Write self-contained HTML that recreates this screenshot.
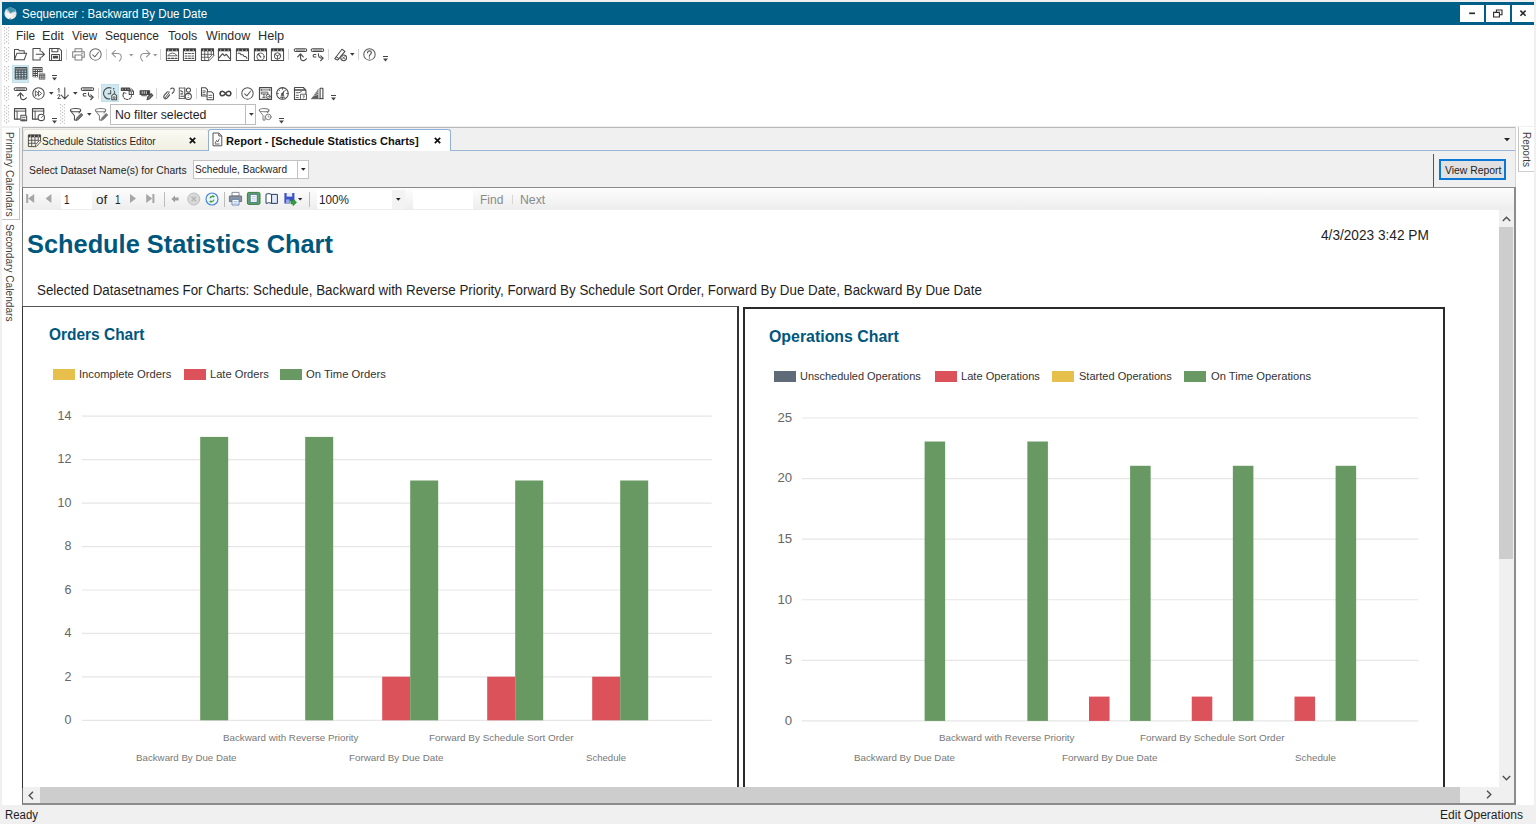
<!DOCTYPE html>
<html lang="en"><head><meta charset="utf-8"><title>Sequencer : Backward By Due Date</title>
<style>
html,body{margin:0;padding:0;}
body{width:1536px;height:824px;overflow:hidden;background:#f0f0f0;font-family:"Liberation Sans",sans-serif;}
#root{position:relative;width:1536px;height:824px;overflow:hidden;background:#f0f0f0;}
.a{position:absolute;box-sizing:border-box;}
.t{position:absolute;white-space:nowrap;line-height:0;font-kerning:normal;}
svg{position:absolute;overflow:visible;}
.v{position:absolute;white-space:nowrap;line-height:0;transform-origin:0 0;}

</style></head>
<body>
<div id="root">
<div class="a" style="left:2px;top:2px;width:1532px;height:23px;background:#005f87;"></div>
<div class="a" style="left:1460px;top:5px;width:24px;height:17px;background:#ffffff;"></div>
<div class="a" style="left:1486px;top:5px;width:24px;height:17px;background:#ffffff;"></div>
<div class="a" style="left:1512px;top:5px;width:22px;height:17px;background:#ffffff;"></div>
<div class="a" style="left:2px;top:25px;width:1532px;height:101px;background:#ffffff;"></div>
<div class="a" style="left:110px;top:104px;width:146px;height:21px;background:#ffffff;border:1px solid #bdbdbd;"></div>
<div class="a" style="left:245px;top:105px;width:1px;height:19px;background:#bdbdbd;"></div>
<div class="a" style="left:0px;top:127px;width:2px;height:679px;background:#f0f0f0;"></div>
<div class="a" style="left:2px;top:128px;width:20px;height:678px;background:#ffffff;"></div>
<div class="a" style="left:20px;top:127px;width:2px;height:60px;background:#f0f0f0;"></div>
<div class="a" style="left:22px;top:127px;width:1494px;height:24px;background:#f0f0f0;"></div>
<div class="a" style="left:22px;top:150px;width:1494px;height:1px;background:#9bb7d6;"></div>
<div class="a" style="left:23px;top:129px;width:186px;height:21px;background:linear-gradient(#fbfaf4,#f1efe2);border:1px solid #e6e4d8;border-bottom:none;border-radius:3px 3px 0 0;"></div>
<div class="a" style="left:208px;top:129px;width:243px;height:23px;background:#ffffff;border:1px solid #8fb0d8;border-bottom:none;border-radius:3px 3px 0 0;"></div>
<div class="a" style="left:22px;top:151px;width:1494px;height:36px;background:#f0f0f0;"></div>
<div class="a" style="left:193px;top:160px;width:116px;height:19px;background:#ffffff;border:1px solid #c3c3c3;"></div>
<div class="a" style="left:297px;top:161px;width:1px;height:17px;background:#c3c3c3;"></div>
<div class="a" style="left:1433px;top:154px;width:1px;height:33px;background:#555555;"></div>
<div class="a" style="left:1439px;top:159px;width:67px;height:21px;background:#e1e1e1;border:2px solid #0a78d7;"></div>
<div class="a" style="left:22px;top:187px;width:1494px;height:618px;background:#ffffff;border:1px solid #8a8a8a;border-left:1px solid #707070;border-right:2px solid #8c8c8c;border-bottom:2px solid #8c8c8c;"></div>
<div class="a" style="left:23px;top:188px;width:1491px;height:22px;background:linear-gradient(#fdfdfd,#ededed);"></div>
<div class="a" style="left:61px;top:190px;width:31px;height:19px;background:#ffffff;"></div>
<div class="a" style="left:317px;top:190px;width:88px;height:19px;background:#ffffff;"></div>
<div class="a" style="left:413px;top:190px;width:60px;height:19px;background:#ffffff;"></div>
<div class="a" style="left:512px;top:195px;width:1px;height:9px;background:#d6d6d6;"></div>
<div class="a" style="left:22px;top:306px;width:717px;height:482px;border-top:1px solid #555;border-right:2px solid #333;border-left:1px solid #333;"></div>
<div class="a" style="left:53px;top:369px;width:22px;height:11px;background:#e6c04b;"></div>
<div class="a" style="left:183.5px;top:369px;width:22px;height:11px;background:#db525a;"></div>
<div class="a" style="left:280px;top:369px;width:22px;height:11px;background:#699962;"></div>
<div class="a" style="left:743px;top:307px;width:702px;height:481px;border:2px solid #2a2a2a;border-bottom:none;"></div>
<div class="a" style="left:774px;top:371px;width:22px;height:11px;background:#5f6b78;"></div>
<div class="a" style="left:935px;top:371px;width:22px;height:11px;background:#db525a;"></div>
<div class="a" style="left:1052px;top:371px;width:22px;height:11px;background:#e6c04b;"></div>
<div class="a" style="left:1184px;top:371px;width:22px;height:11px;background:#699962;"></div>
<svg style="left:0;top:0" width="1536" height="824" viewBox="0 0 1536 824"><path d="M81.9 720.30H711.7" stroke="#e6e6e6" stroke-width="1.2"/><path d="M81.9 676.86H711.7" stroke="#e6e6e6" stroke-width="1.2"/><path d="M81.9 633.42H711.7" stroke="#e6e6e6" stroke-width="1.2"/><path d="M81.9 589.98H711.7" stroke="#e6e6e6" stroke-width="1.2"/><path d="M81.9 546.54H711.7" stroke="#e6e6e6" stroke-width="1.2"/><path d="M81.9 503.10H711.7" stroke="#e6e6e6" stroke-width="1.2"/><path d="M81.9 459.66H711.7" stroke="#e6e6e6" stroke-width="1.2"/><path d="M81.9 416.22H711.7" stroke="#e6e6e6" stroke-width="1.2"/><rect x="200.20" y="436.90" width="28.00" height="283.40" fill="#699962"/><rect x="305.20" y="436.90" width="28.00" height="283.40" fill="#699962"/><rect x="382.20" y="676.70" width="28.00" height="43.60" fill="#db525a"/><rect x="410.20" y="480.50" width="28.00" height="239.80" fill="#699962"/><rect x="487.20" y="676.70" width="28.00" height="43.60" fill="#db525a"/><rect x="515.20" y="480.50" width="28.00" height="239.80" fill="#699962"/><rect x="592.20" y="676.70" width="28.00" height="43.60" fill="#db525a"/><rect x="620.20" y="480.50" width="28.00" height="239.80" fill="#699962"/><path d="M801.8 720.90H1418.3" stroke="#e6e6e6" stroke-width="1.2"/><path d="M801.8 660.32H1418.3" stroke="#e6e6e6" stroke-width="1.2"/><path d="M801.8 599.74H1418.3" stroke="#e6e6e6" stroke-width="1.2"/><path d="M801.8 539.16H1418.3" stroke="#e6e6e6" stroke-width="1.2"/><path d="M801.8 478.58H1418.3" stroke="#e6e6e6" stroke-width="1.2"/><path d="M801.8 418.00H1418.3" stroke="#e6e6e6" stroke-width="1.2"/><rect x="924.60" y="441.50" width="20.55" height="279.40" fill="#699962"/><rect x="1027.35" y="441.50" width="20.55" height="279.40" fill="#699962"/><rect x="1089.00" y="696.60" width="20.55" height="24.30" fill="#db525a"/><rect x="1130.10" y="465.79" width="20.55" height="255.11" fill="#699962"/><rect x="1191.75" y="696.60" width="20.55" height="24.30" fill="#db525a"/><rect x="1232.85" y="465.79" width="20.55" height="255.11" fill="#699962"/><rect x="1294.50" y="696.60" width="20.55" height="24.30" fill="#db525a"/><rect x="1335.60" y="465.79" width="20.55" height="255.11" fill="#699962"/></svg>
<div class="a" style="left:1499px;top:210px;width:15px;height:577px;background:#f0f0f0;"></div>
<div class="a" style="left:1499px;top:227px;width:14px;height:332px;background:#cdcdcd;"></div>
<div class="a" style="left:23px;top:787px;width:1491px;height:16px;background:#f0f0f0;"></div>
<div class="a" style="left:40px;top:787px;width:1420px;height:16px;background:#cdcdcd;"></div>
<div class="a" style="left:1516px;top:127px;width:18px;height:679px;background:#ffffff;"></div>
<div class="a" style="left:1534px;top:25px;width:2px;height:781px;background:#f0f0f0;"></div>
<div class="a" style="left:0px;top:805px;width:1536px;height:19px;background:#f0f0f0;"></div>
<svg style="left:4px;top:47px" width="6" height="15.5" viewBox="0 0 6 15.5"><path d="M0.6 0.60h.01M4.5 0.60h.01M2.55 2.15h.01M0.6 3.70h.01M4.5 3.70h.01M2.55 5.25h.01M0.6 6.80h.01M4.5 6.80h.01M2.55 8.35h.01M0.6 9.90h.01M4.5 9.90h.01M2.55 11.45h.01M0.6 13.00h.01M4.5 13.00h.01M2.55 14.55h.01" stroke="#bdbdbd" stroke-width="1.15" stroke-linecap="square" fill="none"/></svg>
<svg style="left:13.30px;top:47.30px" width="14.96" height="14.96" viewBox="0 0 16 16" fill="none" stroke="#4a4a4a" stroke-width="1.1" stroke-linejoin="round" stroke-linecap="round"><path d="M1.6 13.6V2.6H5.6L7 4.1H12V6.6"/><path d="M1.6 13.6L4.2 6.6H14.6L12 13.6Z"/></svg>
<svg style="left:31.00px;top:47.30px" width="14.96" height="14.96" viewBox="0 0 16 16" fill="none" stroke="#4a4a4a" stroke-width="1.1" stroke-linejoin="round" stroke-linecap="round"><path d="M9.8 4.5V1.6H2.1V13.9H9.8V11"/><path d="M5.6 7.8H14.2M11.4 4.8L14.4 7.8L11.4 10.8"/></svg>
<svg style="left:48.30px;top:47.30px" width="14.96" height="14.96" viewBox="0 0 16 16" fill="none" stroke="#4a4a4a" stroke-width="1.1" stroke-linejoin="round" stroke-linecap="round"><path d="M1.6 1.6H12L14.4 4V14.4H1.6Z"/><path d="M4.2 1.8V5.2H10.6V1.8"/><path d="M3.8 14.2V8H12.2V14.2"/><path d="M5.8 9.8H10.2V11.8H5.8Z" fill="#3b3b3b"/></svg>
<div class="a" style="left:66px;top:49px;width:1px;height:11px;background:#d4d4d4;"></div>
<svg style="left:70.80px;top:47.30px" width="14.96" height="14.96" viewBox="0 0 16 16" fill="none" stroke="#7e7e7e" stroke-width="1.1" stroke-linejoin="round" stroke-linecap="round"><path d="M4.3 5.2V1.8H11.7V5.2"/><path d="M4.3 11H1.8V5.2H14.2V11H11.7"/><path d="M4.3 8.6H11.7V14H4.3Z"/><path d="M11.5 7h.6" /></svg>
<svg style="left:88.30px;top:47.30px" width="14.96" height="14.96" viewBox="0 0 16 16" fill="none" stroke="#6a6a6a" stroke-width="1.1" stroke-linejoin="round" stroke-linecap="round"><circle cx="8" cy="8" r="6.1"/><path d="M5 8.3L7.3 10.5L11.3 5.6"/></svg>
<div class="a" style="left:106px;top:49px;width:1px;height:11px;background:#d4d4d4;"></div>
<svg style="left:110.10px;top:47.70px" width="14.96" height="14.96" viewBox="0 0 16 16" fill="none" stroke="#8e8e8e" stroke-width="1.1" stroke-linejoin="round" stroke-linecap="round"><path d="M5.8 2.4L2.2 6L5.8 9.6"/><path d="M2.4 6H8.6Q12.6 6.4 12 10.4Q11.6 12.8 9.8 14"/></svg>
<svg style="left:129px;top:53.5px" width="4.4" height="2.6" viewBox="0 0 4.4 2.6"><path d="M0 0H4.4L2.2 2.6Z" fill="#9a9a9a"/></svg>
<svg style="left:136.70px;top:47.70px" width="14.96" height="14.96" viewBox="0 0 16 16" fill="none" stroke="#8e8e8e" stroke-width="1.1" stroke-linejoin="round" stroke-linecap="round"><path d="M10.2 2.4L13.8 6L10.2 9.6"/><path d="M13.6 6H7.4Q3.4 6.4 4 10.4Q4.4 12.8 6.2 14"/></svg>
<svg style="left:153.3px;top:53.5px" width="4.4" height="2.6" viewBox="0 0 4.4 2.6"><path d="M0 0H4.4L2.2 2.6Z" fill="#9a9a9a"/></svg>
<div class="a" style="left:160px;top:49px;width:1px;height:11px;background:#d4d4d4;"></div>
<svg style="left:164.80px;top:47.10px" width="14.96" height="14.96" viewBox="0 0 16 16" fill="none" stroke="#4a4a4a" stroke-width="1.1" stroke-linejoin="round" stroke-linecap="round"><path d="M1.5 2H14.5V14.5H1.5Z"/><path d="M1.5 2H14.5V4.6H1.5Z" fill="#3b3b3b" stroke="none"/><path d="M4 3.3h.01M8 3.3h.01M12 3.3h.01" stroke="#fff" stroke-width="1.2"/><path d="M3.2 9Q8 3.6 12.8 9M3.2 9.4H12.8" stroke-width="0.9"/><path d="M3.2 12.2h2M6.8 12.2h2.4M10.8 12.2h2" stroke-width="1.3"/></svg>
<svg style="left:182.35px;top:47.10px" width="14.96" height="14.96" viewBox="0 0 16 16" fill="none" stroke="#4a4a4a" stroke-width="1.1" stroke-linejoin="round" stroke-linecap="round"><path d="M1.5 2H14.5V14.5H1.5Z"/><path d="M1.5 2H14.5V4.6H1.5Z" fill="#3b3b3b" stroke="none"/><path d="M4 3.3h.01M8 3.3h.01M12 3.3h.01" stroke="#fff" stroke-width="1.2"/><path d="M3.4 7h2M7 7h2M10.6 7h2M3.4 9.6h2M7 9.6h2M10.6 9.6h2M3.4 12.2h2M7 12.2h2M10.6 12.2h2" stroke-width="1.2" stroke="#555"/></svg>
<svg style="left:199.90px;top:47.10px" width="14.96" height="14.96" viewBox="0 0 16 16" fill="none" stroke="#4a4a4a" stroke-width="1.1" stroke-linejoin="round" stroke-linecap="round"><path d="M14.5 8.5V2H1.5V14.5H8"/><path d="M1.5 2H14.5V4.6H1.5Z" fill="#3b3b3b" stroke="none"/><path d="M4 3.3h.01M8 3.3h.01M12 3.3h.01" stroke="#fff" stroke-width="1.2"/><path d="M1.5 7.8H12M1.5 11H9M5 4.6V14.5M8.5 4.6V11.5M12 4.6V8" stroke-width="0.9"/><path d="M8.6 14.6L9.4 12.2L13.6 7.6L15 9L10.8 13.6Z" stroke-width="0.9"/></svg>
<svg style="left:217.45px;top:47.10px" width="14.96" height="14.96" viewBox="0 0 16 16" fill="none" stroke="#4a4a4a" stroke-width="1.1" stroke-linejoin="round" stroke-linecap="round"><path d="M1.5 2H14.5V14.5H1.5Z"/><path d="M1.5 2H14.5V4.6H1.5Z" fill="#3b3b3b" stroke="none"/><path d="M4 3.3h.01M8 3.3h.01M12 3.3h.01" stroke="#fff" stroke-width="1.2"/><path d="M2.2 11.6L6 7.2L8 9.4L10 7.8L13.8 12.6" stroke-width="1.2"/></svg>
<svg style="left:235.00px;top:47.10px" width="14.96" height="14.96" viewBox="0 0 16 16" fill="none" stroke="#4a4a4a" stroke-width="1.1" stroke-linejoin="round" stroke-linecap="round"><path d="M1.5 2H14.5V14.5H1.5Z"/><path d="M1.5 2H14.5V4.6H1.5Z" fill="#3b3b3b" stroke="none"/><path d="M4 3.3h.01M8 3.3h.01M12 3.3h.01" stroke="#fff" stroke-width="1.2"/><path d="M3.2 6.6H5.4L6.6 8.4H8.6L9.8 10.2H11.4L12.8 12.2" stroke-width="1.1"/></svg>
<svg style="left:252.55px;top:47.10px" width="14.96" height="14.96" viewBox="0 0 16 16" fill="none" stroke="#4a4a4a" stroke-width="1.1" stroke-linejoin="round" stroke-linecap="round"><path d="M1.5 2H14.5V14.5H1.5Z"/><path d="M1.5 2H14.5V4.6H1.5Z" fill="#3b3b3b" stroke="none"/><path d="M4 3.3h.01M8 3.3h.01M12 3.3h.01" stroke="#fff" stroke-width="1.2"/><circle cx="8" cy="10.4" r="3.9" stroke-width="0.9"/><path d="M5.6 7.6L8.4 10.8" stroke-width="1.3"/></svg>
<svg style="left:270.10px;top:47.10px" width="14.96" height="14.96" viewBox="0 0 16 16" fill="none" stroke="#4a4a4a" stroke-width="1.1" stroke-linejoin="round" stroke-linecap="round"><path d="M1.5 2H14.5V14.5H1.5Z"/><path d="M1.5 2H14.5V4.6H1.5Z" fill="#3b3b3b" stroke="none"/><path d="M4 3.3h.01M8 3.3h.01M12 3.3h.01" stroke="#fff" stroke-width="1.2"/><circle cx="8" cy="9.6" r="3.4" stroke-width="1"/><path d="M8 9.6V13M8 9.6L5.2 7.8M8 9.6L10.8 7.8" stroke-width="0.9"/></svg>
<div class="a" style="left:288px;top:49px;width:1px;height:11px;background:#d4d4d4;"></div>
<svg style="left:292.70px;top:47.30px" width="14.96" height="14.96" viewBox="0 0 16 16" fill="none" stroke="#4a4a4a" stroke-width="1.1" stroke-linejoin="round" stroke-linecap="round"><rect x="1.3" y="1.8" width="13.4" height="3" rx="1.5"/><path d="M3.6 3.3H12.4" stroke-width="0.9"/><path d="M8 7.8V11Q8 14.8 11.4 14.5Q13.2 14.3 14.4 12.6" stroke-width="1.25"/><path d="M5 10.6L8 7.4L11 10.6" stroke-width="1.25"/></svg>
<svg style="left:310.30px;top:47.30px" width="14.96" height="14.96" viewBox="0 0 16 16" fill="none" stroke="#4a4a4a" stroke-width="1.1" stroke-linejoin="round" stroke-linecap="round"><rect x="1.3" y="1.8" width="13.4" height="3" rx="1.5"/><path d="M3.6 3.3H12.4" stroke-width="0.9"/><path d="M6.3 8.1H4Q2.6 9.4 4 10.7H6.3"/><path d="M9.1 7.4Q8.3 11.8 13.8 12" stroke-width="1.2"/><path d="M11.4 9.4L14.1 12L11.4 14.7" stroke-width="1.2"/></svg>
<div class="a" style="left:328px;top:49px;width:1px;height:11px;background:#d4d4d4;"></div>
<svg style="left:332.70px;top:47.30px" width="14.96" height="14.96" viewBox="0 0 16 16" fill="none" stroke="#4a4a4a" stroke-width="1.1" stroke-linejoin="round" stroke-linecap="round"><path d="M1.8 12.6L9.6 2.4L12.8 4.6L5 14Z"/><path d="M3.4 10.6L6.4 12.4"/><circle cx="11.4" cy="11.6" r="3.1" fill="#fff"/><path d="M10 10.2L12.8 13M12.8 10.2L10 13" stroke-width="0.9"/></svg>
<svg style="left:350px;top:53.3px" width="4.6" height="2.8" viewBox="0 0 4.6 2.8"><path d="M0 0H4.6L2.3 2.8Z" fill="#3b3b3b"/></svg>
<div class="a" style="left:358px;top:49px;width:1px;height:11px;background:#d4d4d4;"></div>
<svg style="left:362.20px;top:46.70px" width="14.96" height="14.96" viewBox="0 0 16 16" fill="none" stroke="#5a5a5a" stroke-width="1.1" stroke-linejoin="round" stroke-linecap="round"><circle cx="8" cy="8" r="6.1"/><path d="M5.9 6.2Q6 4.2 8 4.2Q10 4.2 10 6Q10 7.2 8.8 7.9Q7.9 8.5 7.9 9.8M7.9 11.6v.3" stroke-width="1.3"/></svg>
<svg style="left:383px;top:55.8px" width="5" height="6" viewBox="0 0 5 6"><path d="M0 0.5H5" stroke="#444" stroke-width="1"/><path d="M0 2.5H5L2.5 5.5Z" fill="#444"/></svg>
<svg style="left:4px;top:66px" width="6" height="15.5" viewBox="0 0 6 15.5"><path d="M0.6 0.60h.01M4.5 0.60h.01M2.55 2.15h.01M0.6 3.70h.01M4.5 3.70h.01M2.55 5.25h.01M0.6 6.80h.01M4.5 6.80h.01M2.55 8.35h.01M0.6 9.90h.01M4.5 9.90h.01M2.55 11.45h.01M0.6 13.00h.01M4.5 13.00h.01M2.55 14.55h.01" stroke="#bdbdbd" stroke-width="1.15" stroke-linecap="square" fill="none"/></svg>
<div class="a" style="left:12px;top:65px;width:17px;height:18px;background:#d0e8ef;border:1px solid #c2e0e9;"></div>
<svg style="left:12.60px;top:65.30px" width="14.96" height="14.96" viewBox="0 0 16 16" fill="none" stroke="#4a4a4a" stroke-width="1.1" stroke-linejoin="round" stroke-linecap="round"><rect x="1.8" y="2.2" width="13.6" height="13.4" rx="0.8" fill="#454c50" stroke="none"/><path d="M3 4.1H14.2" stroke="#cfe3ea" stroke-width="0.8"/><path d="M3.00 5.80h1.9v1.5h-1.9zM6.10 5.80h1.9v1.5h-1.9zM9.20 5.80h1.9v1.5h-1.9zM12.30 5.80h1.9v1.5h-1.9zM3.00 8.30h1.9v1.5h-1.9zM6.10 8.30h1.9v1.5h-1.9zM9.20 8.30h1.9v1.5h-1.9zM12.30 8.30h1.9v1.5h-1.9zM3.00 10.80h1.9v1.5h-1.9zM6.10 10.80h1.9v1.5h-1.9zM9.20 10.80h1.9v1.5h-1.9zM12.30 10.80h1.9v1.5h-1.9zM3.00 13.30h1.9v1.5h-1.9zM6.10 13.30h1.9v1.5h-1.9zM9.20 13.30h1.9v1.5h-1.9zM12.30 13.30h1.9v1.5h-1.9z" fill="#b9d2da" stroke="none"/></svg>
<svg style="left:30.50px;top:65.30px" width="14.96" height="14.96" viewBox="0 0 16 16" fill="none" stroke="#4a4a4a" stroke-width="1.1" stroke-linejoin="round" stroke-linecap="round"><rect x="1.6" y="2.2" width="10.8" height="11" rx="0.8" fill="#4a4a4a" stroke="none"/><path d="M2.6 3.9H11.4" stroke="#fff" stroke-width="0.8"/><path d="M2.60 5.40h1.4v1.1h-1.4zM5.10 5.40h1.4v1.1h-1.4zM7.60 5.40h1.4v1.1h-1.4zM10.10 5.40h1.4v1.1h-1.4zM2.60 7.50h1.4v1.1h-1.4zM5.10 7.50h1.4v1.1h-1.4zM7.60 7.50h1.4v1.1h-1.4zM10.10 7.50h1.4v1.1h-1.4zM2.60 9.60h1.4v1.1h-1.4zM5.10 9.60h1.4v1.1h-1.4zM7.60 9.60h1.4v1.1h-1.4zM10.10 9.60h1.4v1.1h-1.4zM2.60 11.70h1.4v1.1h-1.4zM5.10 11.70h1.4v1.1h-1.4zM7.60 11.70h1.4v1.1h-1.4zM10.10 11.70h1.4v1.1h-1.4z" fill="#ffffff" stroke="none"/><rect x="8" y="8.6" width="7.4" height="7.2" rx="0.8" fill="#fff" stroke="#fff" stroke-width="1.2"/><rect x="8.4" y="9" width="6.8" height="6.6" rx="0.6" fill="#4a4a4a" stroke="none"/><path d="M9.2 10.3H14.4" stroke="#ddd" stroke-width="0.6"/><path d="M9.30 11.40h1.2v1.2h-1.2zM11.30 11.40h1.2v1.2h-1.2zM13.30 11.40h1.2v1.2h-1.2zM9.30 13.40h1.2v1.2h-1.2zM11.30 13.40h1.2v1.2h-1.2zM13.30 13.40h1.2v1.2h-1.2z" fill="#ffffff" stroke="none"/></svg>
<svg style="left:52px;top:75px" width="5" height="6" viewBox="0 0 5 6"><path d="M0 0.5H5" stroke="#444" stroke-width="1"/><path d="M0 2.5H5L2.5 5.5Z" fill="#444"/></svg>
<svg style="left:4px;top:85.5px" width="6" height="15.5" viewBox="0 0 6 15.5"><path d="M0.6 0.60h.01M4.5 0.60h.01M2.55 2.15h.01M0.6 3.70h.01M4.5 3.70h.01M2.55 5.25h.01M0.6 6.80h.01M4.5 6.80h.01M2.55 8.35h.01M0.6 9.90h.01M4.5 9.90h.01M2.55 11.45h.01M0.6 13.00h.01M4.5 13.00h.01M2.55 14.55h.01" stroke="#bdbdbd" stroke-width="1.15" stroke-linecap="square" fill="none"/></svg>
<svg style="left:13.10px;top:85.80px" width="14.96" height="14.96" viewBox="0 0 16 16" fill="none" stroke="#4a4a4a" stroke-width="1.1" stroke-linejoin="round" stroke-linecap="round"><rect x="1.3" y="1.8" width="13.4" height="3" rx="1.5"/><path d="M3.6 3.3H12.4" stroke-width="0.9"/><path d="M8 7.8V11Q8 14.8 11.4 14.5Q13.2 14.3 14.4 12.6" stroke-width="1.25"/><path d="M5 10.6L8 7.4L11 10.6" stroke-width="1.25"/></svg>
<svg style="left:30.80px;top:85.80px" width="14.96" height="14.96" viewBox="0 0 16 16" fill="none" stroke="#4a4a4a" stroke-width="1.1" stroke-linejoin="round" stroke-linecap="round"><circle cx="8" cy="8" r="6.1"/><path d="M5 5.4L8 8L5 10.6ZM8.4 5.4L11.4 8L8.4 10.6Z" stroke-width="0.9"/></svg>
<svg style="left:48.6px;top:92px" width="4.6" height="2.8" viewBox="0 0 4.6 2.8"><path d="M0 0H4.6L2.3 2.8Z" fill="#3b3b3b"/></svg>
<svg style="left:56.10px;top:85.80px" width="14.96" height="14.96" viewBox="0 0 16 16" fill="none" stroke="#4a4a4a" stroke-width="1.1" stroke-linejoin="round" stroke-linecap="round"><path d="M2 3.4L3.2 2.4V6.6" stroke-width="1"/><path d="M1.8 9.8Q3 8.4 4.2 9.6Q4.6 10.6 1.8 13.4H4.6" stroke-width="1"/><path d="M9.4 2V13.6M5.6 9.8L9.4 13.8L13.2 9.8"/></svg>
<svg style="left:73.2px;top:92px" width="4.6" height="2.8" viewBox="0 0 4.6 2.8"><path d="M0 0H4.6L2.3 2.8Z" fill="#3b3b3b"/></svg>
<svg style="left:80.30px;top:85.80px" width="14.96" height="14.96" viewBox="0 0 16 16" fill="none" stroke="#4a4a4a" stroke-width="1.1" stroke-linejoin="round" stroke-linecap="round"><rect x="1.3" y="1.8" width="13.4" height="3" rx="1.5"/><path d="M3.6 3.3H12.4" stroke-width="0.9"/><path d="M6.3 8.1H4Q2.6 9.4 4 10.7H6.3"/><path d="M9.1 7.4Q8.3 11.8 13.8 12" stroke-width="1.2"/><path d="M11.4 9.4L14.1 12L11.4 14.7" stroke-width="1.2"/></svg>
<div class="a" style="left:98px;top:88px;width:1px;height:11px;background:#d4d4d4;"></div>
<div class="a" style="left:101px;top:84px;width:18px;height:18px;background:#d0e8ef;border:1px solid #c2e0e9;"></div>
<svg style="left:102.90px;top:85.80px" width="14.96" height="14.96" viewBox="0 0 16 16" fill="none" stroke="#4a4a4a" stroke-width="1.1" stroke-linejoin="round" stroke-linecap="round"><path d="M8.6 2.2A6 6 0 1 0 7.2 13.8" stroke-width="1.2"/><path d="M8.2 4.8V8.2H5.4" stroke-width="1.1"/><path d="M11.4 3h.01" stroke-width="1.6"/><path d="M11.8 5Q13.2 6.2 12.4 8" stroke-width="1"/><path d="M9.4 10.4L12 8.2L14.6 10.4V14.6H9.4Z" fill="#e8f3f7"/><path d="M11.4 11.6h1.6v1.6h-1.6z" stroke-width="0.8"/></svg>
<svg style="left:120.30px;top:85.80px" width="14.96" height="14.96" viewBox="0 0 16 16" fill="none" stroke="#4a4a4a" stroke-width="1.1" stroke-linejoin="round" stroke-linecap="round"><path d="M1.4 2.2H10.4V4.8H1.4Z" fill="#3b3b3b"/><path d="M3 3.5h.01M5.8 3.5h.01M8.6 3.5h.01" stroke="#fff" stroke-width="1"/><path d="M4 7.2A4.6 4.6 0 1 0 12.4 9.6" stroke-dasharray="1.6 1.3" stroke-width="1.1"/><path d="M3.4 9.4L4 7L6.4 7.8" stroke-width="0.9"/><path d="M9.8 5.4h4.6v3.8H9.8z" fill="#fff"/><path d="M10.9 5.4V3.8q1.2 -1.6 2.4 0v1.6" stroke-width="0.9"/><path d="M12.1 6.6v1.4" stroke-width="1"/></svg>
<svg style="left:138.70px;top:85.80px" width="14.96" height="14.96" viewBox="0 0 16 16" fill="none" stroke="#4a4a4a" stroke-width="1.1" stroke-linejoin="round" stroke-linecap="round"><path d="M1.2 5H11.4V9H1.2Z" fill="#3b3b3b"/><path d="M3.4 6v2M5.6 6v2M7.8 6v2" stroke="#fff" stroke-width="0.9"/><path d="M3 9V10.4H8" stroke-width="1"/><path d="M8.6 14.6L9.4 11.6L13 8.2L14.8 10L11.4 13.6Z" fill="#777"/><path d="M9.8 9.4h3" stroke-width="0.9"/></svg>
<div class="a" style="left:156px;top:88px;width:1px;height:11px;background:#d4d4d4;"></div>
<svg style="left:160.50px;top:85.80px" width="14.96" height="14.96" viewBox="0 0 16 16" fill="none" stroke="#4a4a4a" stroke-width="1.1" stroke-linejoin="round" stroke-linecap="round"><path d="M6.8 6.2L3.6 9.8Q2.2 11.8 3.6 13.2Q5 14.4 6.6 12.8L9.2 9.4" stroke-width="1.2"/><path d="M4.4 12.6L8.4 7.6Q9.4 6.2 8.4 5.6" stroke-width="1"/><path d="M10.4 3.2Q12.2 1.2 13.8 2.8Q14.8 4.2 13.6 6.2L12 8" stroke-width="1.2"/></svg>
<svg style="left:178.10px;top:85.80px" width="14.96" height="14.96" viewBox="0 0 16 16" fill="none" stroke="#4a4a4a" stroke-width="1.1" stroke-linejoin="round" stroke-linecap="round"><path d="M1.4 2.2H6.6M1.4 2.2V13.4M1.4 13.4H7" stroke-width="0.9"/><path d="M3 5L5 6.4M3 8.4h2M3 11h3" stroke-width="1.2"/><path d="M7.2 2.2V13.4" stroke-width="1.6" stroke="#777"/><circle cx="11.2" cy="4.4" r="2.2" fill="#fff"/><circle cx="11" cy="11.2" r="3.3" fill="#fff"/><path d="M11 9.6v.2M9.8 13Q11 10.6 12.2 13" stroke-width="0.9"/></svg>
<div class="a" style="left:196px;top:88px;width:1px;height:11px;background:#d4d4d4;"></div>
<svg style="left:200.30px;top:85.80px" width="14.96" height="14.96" viewBox="0 0 16 16" fill="none" stroke="#4a4a4a" stroke-width="1.1" stroke-linejoin="round" stroke-linecap="round"><path d="M1.6 1.8H5.8L8 4V10.8H1.6Z"/><path d="M3 5.2h2.6M3 7.2L5.6 6.4M3 9h2.6" stroke-width="0.9"/><path d="M7.6 6.2H12.4L14.4 8.2V14.6H7.6Z" fill="#fff"/><path d="M9.4 10h3.2M9.4 12.4h3.2" stroke-width="0.9"/></svg>
<svg style="left:217.50px;top:85.80px" width="14.96" height="14.96" viewBox="0 0 16 16" fill="none" stroke="#444" stroke-width="1.5" stroke-linejoin="round" stroke-linecap="round"><path d="M8 8Q5.6 4.6 3.2 6Q1.2 8 3.2 10Q5.6 11.4 8 8Q10.4 4.6 12.8 6Q14.8 8 12.8 10Q10.4 11.4 8 8Z" stroke-width="1.7"/></svg>
<div class="a" style="left:236px;top:88px;width:1px;height:11px;background:#d4d4d4;"></div>
<svg style="left:240.10px;top:85.80px" width="14.96" height="14.96" viewBox="0 0 16 16" fill="none" stroke="#555" stroke-width="1.1" stroke-linejoin="round" stroke-linecap="round"><circle cx="8" cy="8" r="6.1"/><path d="M5 8.3L7.3 10.5L11.3 5.6"/></svg>
<svg style="left:257.50px;top:85.80px" width="14.96" height="14.96" viewBox="0 0 16 16" fill="none" stroke="#4a4a4a" stroke-width="1.1" stroke-linejoin="round" stroke-linecap="round"><path d="M1.6 1.8H14.4V14.4H1.6Z" stroke-width="1.3"/><path d="M3.4 4.2H12.6M3.4 3.4v1.6M12.6 3.4v1.6" stroke-width="0.9"/><path d="M4 6.6H10.6V8.6H4Z" stroke-width="0.9"/><path d="M6.4 8.6V12.4" stroke-width="0.9"/><circle cx="10.8" cy="11.2" r="2.2" fill="#fff" stroke-width="0.9"/><path d="M9.8 11.2l.8.8l1.4-1.6" stroke-width="0.8"/><path d="M5 12.2h2.4" stroke-width="0.9"/></svg>
<svg style="left:275.10px;top:85.80px" width="14.96" height="14.96" viewBox="0 0 16 16" fill="none" stroke="#4a4a4a" stroke-width="1.1" stroke-linejoin="round" stroke-linecap="round"><circle cx="8" cy="8" r="6.2" stroke-width="1.2"/><path d="M8 2.4v1.2M8 12.4v1.2M2.4 8h1.2M12.4 8h1.2M4 4l.8.8M12 4l-.8.8" stroke-width="0.9"/><path d="M8 8.6L9.8 5.4" stroke-width="1.2"/><path d="M6 12h4M6.6 10.4h2.8" stroke-width="1.2"/><circle cx="8" cy="8.6" r="0.9" fill="#3b3b3b"/></svg>
<svg style="left:292.50px;top:85.80px" width="14.96" height="14.96" viewBox="0 0 16 16" fill="none" stroke="#4a4a4a" stroke-width="1.1" stroke-linejoin="round" stroke-linecap="round"><path d="M1.6 2Q1.6 1.6 2 1.6H11L13.8 4.4V14.4H1.6Z" stroke-width="1.2"/><path d="M1.6 4.4H13" stroke-width="1.6"/><path d="M3.4 7.2h3L9 6M3.4 10h2.4M3.4 12.4h2.4" stroke-width="0.9"/><path d="M8.4 8.8H14.4V14.4H8.4Z" fill="#fff" stroke-width="0.9"/><path d="M10.6 10.6h1.6l-1 2.4" stroke-width="0.8"/></svg>
<svg style="left:310.30px;top:85.80px" width="14.96" height="14.96" viewBox="0 0 16 16" fill="none" stroke="#4a4a4a" stroke-width="1.1" stroke-linejoin="round" stroke-linecap="round"><path d="M1.6 13.4L9 2.6V13.4Z" fill="#5a5a5a" stroke="none"/><path d="M3.4 10.8L9 8.8M5 8.4L9 6.6M6.6 6L9 5" stroke="#ddd" stroke-width="0.7"/><path d="M10.8 2.4H13.8V13.4H10.8Z" stroke-width="1.2"/><path d="M1.6 13.6H14" stroke-width="0.9"/></svg>
<svg style="left:331px;top:94.6px" width="5" height="6" viewBox="0 0 5 6"><path d="M0 0.5H5" stroke="#444" stroke-width="1"/><path d="M0 2.5H5L2.5 5.5Z" fill="#444"/></svg>
<svg style="left:4px;top:105px" width="6" height="19" viewBox="0 0 6 19"><path d="M0.6 0.60h.01M4.5 0.60h.01M2.55 2.15h.01M0.6 3.70h.01M4.5 3.70h.01M2.55 5.25h.01M0.6 6.80h.01M4.5 6.80h.01M2.55 8.35h.01M0.6 9.90h.01M4.5 9.90h.01M2.55 11.45h.01M0.6 13.00h.01M4.5 13.00h.01M2.55 14.55h.01M0.6 16.10h.01M4.5 16.10h.01M2.55 17.65h.01" stroke="#bdbdbd" stroke-width="1.15" stroke-linecap="square" fill="none"/></svg>
<svg style="left:13.10px;top:107.10px" width="14.96" height="14.96" viewBox="0 0 16 16" fill="none" stroke="#4a4a4a" stroke-width="1.1" stroke-linejoin="round" stroke-linecap="round"><path d="M1.6 1.8H13.6V8M1.6 1.8V13H7.4" stroke-width="1.2"/><path d="M1.6 4.4H13.6M4.4 4.4V13" stroke-width="1"/><path d="M8.4 8.8H13.4L14.6 10V14.6H8.4Z" fill="#fff" stroke-width="1.1"/><path d="M9.8 11h3.4M10 13.2h3v1.4h-3z" stroke-width="0.9"/></svg>
<svg style="left:30.70px;top:107.10px" width="14.96" height="14.96" viewBox="0 0 16 16" fill="none" stroke="#4a4a4a" stroke-width="1.1" stroke-linejoin="round" stroke-linecap="round"><path d="M1.6 1.8H13.6V7.4M1.6 1.8V13H7" stroke-width="1.2"/><path d="M1.6 4.4H13.6M4.4 4.4V13" stroke-width="1"/><circle cx="11" cy="11.2" r="3.4" fill="#fff" stroke-width="1.2"/><path d="M11 11.4L12.6 9.8" stroke-width="0.9"/></svg>
<svg style="left:52px;top:118.2px" width="5" height="6" viewBox="0 0 5 6"><path d="M0 0.5H5" stroke="#444" stroke-width="1"/><path d="M0 2.5H5L2.5 5.5Z" fill="#444"/></svg>
<svg style="left:60px;top:104px" width="6" height="21.5" viewBox="0 0 6 21.5"><path d="M0.6 0.60h.01M4.5 0.60h.01M2.55 2.15h.01M0.6 3.70h.01M4.5 3.70h.01M2.55 5.25h.01M0.6 6.80h.01M4.5 6.80h.01M2.55 8.35h.01M0.6 9.90h.01M4.5 9.90h.01M2.55 11.45h.01M0.6 13.00h.01M4.5 13.00h.01M2.55 14.55h.01M0.6 16.10h.01M4.5 16.10h.01M2.55 17.65h.01M0.6 19.20h.01M4.5 19.20h.01" stroke="#bdbdbd" stroke-width="1.15" stroke-linecap="square" fill="none"/></svg>
<svg style="left:68.90px;top:107.10px" width="14.96" height="14.96" viewBox="0 0 16 16" fill="none" stroke="#4a4a4a" stroke-width="1.1" stroke-linejoin="round" stroke-linecap="round"><ellipse cx="7" cy="3.4" rx="5.6" ry="1.8"/><path d="M1.6 4L5.8 9.4V14H8" /><path d="M12.4 4L10.6 6.4"/><path d="M7.6 14.2L8.4 11.6L13 6.8L14.8 8.6L10.2 13.4Z" fill="#777" stroke-width="0.8"/></svg>
<svg style="left:86.6px;top:113px" width="4.6" height="2.8" viewBox="0 0 4.6 2.8"><path d="M0 0H4.6L2.3 2.8Z" fill="#3b3b3b"/></svg>
<svg style="left:94.10px;top:107.10px" width="14.96" height="14.96" viewBox="0 0 16 16" fill="none" stroke="#7c7c7c" stroke-width="1.1" stroke-linejoin="round" stroke-linecap="round"><ellipse cx="7" cy="3.4" rx="5.6" ry="1.8"/><path d="M1.6 4L5.8 9.4V14H8" /><path d="M12.4 4L10.6 6.4"/><path d="M7.6 14.2L8.4 11.6L13 6.8L14.8 8.6L10.2 13.4Z" fill="#777" stroke-width="0.8"/></svg>
<svg style="left:248.6px;top:113.2px" width="4.8" height="2.8" viewBox="0 0 4.8 2.8"><path d="M0 0H4.8L2.4 2.8Z" fill="#3b3b3b"/></svg>
<svg style="left:257.50px;top:107.10px" width="14.96" height="14.96" viewBox="0 0 16 16" fill="none" stroke="#777" stroke-width="1.1" stroke-linejoin="round" stroke-linecap="round"><ellipse cx="6.6" cy="3.4" rx="5.2" ry="1.7"/><path d="M1.6 4L5.4 9V14H7.6V9.6" stroke-width="1"/><path d="M11.6 4L10.2 6"/><circle cx="11" cy="10.6" r="3" fill="#fff" stroke-width="1"/><path d="M11 9.4v1.4h1" stroke-width="0.8"/></svg>
<svg style="left:279px;top:118.2px" width="5" height="6" viewBox="0 0 5 6"><path d="M0 0.5H5" stroke="#444" stroke-width="1"/><path d="M0 2.5H5L2.5 5.5Z" fill="#444"/></svg>
<svg style="left:3.5px;top:6.8px" width="13" height="13" viewBox="0 0 13 13"><defs><radialGradient id="ag" cx="0.4" cy="0.6" r="0.7"><stop offset="0" stop-color="#ffffff"/><stop offset="1" stop-color="#d8d8d8"/></radialGradient></defs><circle cx="6.5" cy="6.5" r="6.1" fill="url(#ag)"/><path d="M2.6 1.8A6.1 6.1 0 0 1 12 4.2L6.6 6.2Z" fill="#3f92b0"/><path d="M2.6 3.6L6.4 6.6L10.2 4.4" fill="none" stroke="#bcbcbc" stroke-width="1"/><path d="M6.2 12v-1" stroke="#8a6a50" stroke-width="1"/></svg>
<svg style="left:1460px;top:5px" width="74" height="17" viewBox="0 0 74 17" fill="none" stroke="#2a2a2a" stroke-width="1.2"><path d="M9.2 8.3H15" stroke-width="1.7"/><path d="M36.4 7V5H42V9.8H40M33.6 7.4H39.4V12H33.6Z" stroke-width="1.1"/><path d="M60.4 5.6L65.6 10.8M65.6 5.6L60.4 10.8" stroke-width="1.6"/></svg>
<svg style="left:4px;top:27px" width="6" height="17.5" viewBox="0 0 6 17.5"><path d="M0.6 0.60h.01M4.5 0.60h.01M2.55 2.15h.01M0.6 3.70h.01M4.5 3.70h.01M2.55 5.25h.01M0.6 6.80h.01M4.5 6.80h.01M2.55 8.35h.01M0.6 9.90h.01M4.5 9.90h.01M2.55 11.45h.01M0.6 13.00h.01M4.5 13.00h.01M2.55 14.55h.01M0.6 16.10h.01M4.5 16.10h.01" stroke="#bdbdbd" stroke-width="1.15" stroke-linecap="square" fill="none"/></svg>
<div class="a" style="left:2px;top:128px;width:18px;height:92px;background:#ffffff;border-right:1px solid #c4c4c4;border-bottom:1px solid #c4c4c4;"></div>
<div class="a" style="left:1518px;top:127px;width:16px;height:45px;background:#ffffff;border-left:1px solid #c4c4c4;border-bottom:1px solid #cfcfcf;"></div>
<div class="a" style="left:22px;top:127px;width:1494px;height:1px;background:#b8b8b8;"></div>
<div class="a" style="left:22px;top:127px;width:1px;height:60px;background:#b0b0b0;"></div>
<div class="a" style="left:1515px;top:127px;width:1px;height:60px;background:#d4d4d4;"></div>
<svg style="left:1503.5px;top:138px" width="6" height="3.2" viewBox="0 0 6 3.2"><path d="M0 0H6L3.0 3.2Z" fill="#222"/></svg>
<svg style="left:26.70px;top:132.90px" width="14.96" height="14.96" viewBox="0 0 16 16" fill="none" stroke="#4a4a4a" stroke-width="1.0" stroke-linejoin="round" stroke-linecap="round"><path d="M14.5 8.5V2H1.5V14.5H8"/><path d="M1.5 2H14.5V4.6H1.5Z" fill="#3b3b3b" stroke="none"/><path d="M4 3.3h.01M8 3.3h.01M12 3.3h.01" stroke="#fff" stroke-width="1.2"/><path d="M1.5 7.8H12M1.5 11H9M5 4.6V14.5M8.5 4.6V11.5M12 4.6V8" stroke-width="0.9"/><path d="M8.6 14.6L9.4 12.2L13.6 7.6L15 9L10.8 13.6Z" stroke-width="0.9"/></svg>
<svg style="left:211.6px;top:132.4px" width="11" height="15" viewBox="0 0 11 15" fill="none" stroke="#555" stroke-width="1"><path d="M1 1H6.8L9.8 4V13.8H1Z" fill="#fff"/><path d="M6.8 1V4H9.8"/><path d="M3 11.6L4.6 8.4L5.8 10L7.4 6.6M3 12h4.6" stroke-width="0.9"/></svg>
<svg style="left:189.0px;top:137.2px" width="7" height="7" viewBox="0 0 7 7"><path d="M0.8 0.8L6.2 6.2M6.2 0.8L0.8 6.2" stroke="#111" stroke-width="1.7"/></svg>
<svg style="left:433.5px;top:137.2px" width="7" height="7" viewBox="0 0 7 7"><path d="M0.8 0.8L6.2 6.2M6.2 0.8L0.8 6.2" stroke="#111" stroke-width="1.7"/></svg>
<svg style="left:300.6px;top:168.2px" width="4.6" height="2.8" viewBox="0 0 4.6 2.8"><path d="M0 0H4.6L2.3 2.8Z" fill="#222"/></svg>
<svg style="left:25px;top:192px" width="135" height="14" viewBox="0 0 135 14" fill="#a6a6a6"><path d="M1.2 2h2v9H1.2zM9.2 2v9L3.2 6.5z"/><path d="M26.4 2v9L20.6 6.5z"/><path d="M105 2v9L111 6.5z"/><path d="M121.2 2v9L127.2 6.5zM127.4 2h2v9h-2z"/></svg>
<div class="a" style="left:164px;top:192px;width:1px;height:15px;background:#bcbcbc;"></div>
<svg style="left:170px;top:192px" width="52" height="14" viewBox="0 0 52 14"><path d="M1.4 7L5 3.6V5.6H8.6V8.4H5V10.4Z" fill="#a0a0a0"/><circle cx="23.8" cy="7" r="6" fill="#d9d9d9" stroke="#bdbdbd"/><path d="M21.6 4.8L26 9.2M26 4.8L21.6 9.2" stroke="#b4b4b4" stroke-width="1.3"/><circle cx="42" cy="7" r="6" fill="#eef4fd" stroke="#4a86dc" stroke-width="1.2"/><path d="M39.4 6.2Q40 3.8 42.6 3.8L42.2 2.8L45 4.4L42.8 5.8L42.7 5Q41 5 40.6 6.6Z" fill="#3aa23a"/><path d="M44.6 7.8Q44 10.2 41.4 10.2L41.8 11.2L39 9.6L41.2 8.2L41.3 9Q43 9 43.4 7.4Z" fill="#3aa23a"/></svg>
<div class="a" style="left:224px;top:192px;width:1px;height:15px;background:#bcbcbc;"></div>
<svg style="left:228px;top:191px" width="76" height="16" viewBox="0 0 76 16"><path d="M4 1.4H11V5H4Z" fill="#fff" stroke="#7a8490" stroke-width="0.9"/><path d="M1.4 5H13.6V10.6H1.4Z" fill="#8b939d" stroke="#5d6570" stroke-width="0.8"/><path d="M4 8.4H11V14H4Z" fill="#fff" stroke="#5b7fb4" stroke-width="0.9"/><path d="M5.4 10.6h4.2M5.4 12.2h4.2" stroke="#8fb0dc" stroke-width="0.8"/><rect x="19.4" y="1.4" width="12.6" height="12" rx="1.4" fill="#5aa566" stroke="#3b7d48"/><path d="M22.2 3.4H29.2V11.4H22.2Z" fill="#fff" stroke="#3f5f9a" stroke-width="0.8"/><path d="M23.6 5.4h4.2M23.6 7.2h4.2M23.6 9h4.2" stroke="#a9bfe0" stroke-width="0.8"/><path d="M38 3.2Q41 1.8 43.6 3.4V12.4Q41 11 38 12.4Z" fill="#fff" stroke="#2c3e5e" stroke-width="1"/><path d="M43.6 3.4H49.4V12.4H43.6Z" fill="#dfe9f8" stroke="#2c3e5e" stroke-width="1"/><path d="M56.4 2H66.4V10H62V12.6H56.4Z" fill="#3c50c8"/><path d="M58.6 2H64.2V5.6H58.6Z" fill="#e8ecfa"/><path d="M58 8.4h3.6v4.2H58z" fill="#9aa6e6"/><path d="M62.6 9.4L65 9.4L65 7.6L68.6 11.4L65 14.8L65 13L63 13Z" fill="#2f9e3c" stroke="#1f7a2a" stroke-width="0.5"/><path d="M70 7H74.4L72.2 9.6Z" fill="#222"/></svg>
<div class="a" style="left:309px;top:192px;width:1px;height:15px;background:#bcbcbc;"></div>
<div class="a" style="left:392px;top:190px;width:13px;height:19px;background:#f3f3f3;"></div>
<svg style="left:396px;top:198.4px" width="4.6" height="2.8" viewBox="0 0 4.6 2.8"><path d="M0 0H4.6L2.3 2.8Z" fill="#222"/></svg>
<svg style="left:1501.6px;top:215.6px" width="9" height="6" viewBox="0 0 9 6"><path d="M0.8 5L4.5 1.2L8.2 5" fill="none" stroke="#505050" stroke-width="1.4"/></svg>
<svg style="left:1501.8px;top:775.2px" width="9" height="6" viewBox="0 0 9 6"><path d="M0.8 1L4.5 4.8L8.2 1" fill="none" stroke="#505050" stroke-width="1.4"/></svg>
<svg style="left:28px;top:790.5px" width="6" height="9" viewBox="0 0 6 9"><path d="M5 0.8L1.2 4.5L5 8.2" fill="none" stroke="#505050" stroke-width="1.4"/></svg>
<svg style="left:1486.4px;top:790.4px" width="6" height="9" viewBox="0 0 6 9"><path d="M1 0.8L4.8 4.5L1 8.2" fill="none" stroke="#505050" stroke-width="1.4"/></svg>
<span class="t" id="t0" style="left:22.0px;top:13.84px;font-size:12px;font-weight:400;color:#ffffff;transform:scaleX(0.9640);transform-origin:left center;">Sequencer : Backward By Due Date</span>
<span class="t" id="t1" style="left:15.600000000000003px;top:35.54px;font-size:12px;font-weight:400;color:#2b2b2b;transform:scaleX(0.9904);transform-origin:left center;">File</span>
<span class="t" id="t2" style="left:42.381513714167866px;top:35.54px;font-size:12px;font-weight:400;color:#2b2b2b;transform:scaleX(1.0569);transform-origin:left center;">Edit</span>
<span class="t" id="t3" style="left:72.33322716596346px;top:35.54px;font-size:12px;font-weight:400;color:#2b2b2b;transform:scaleX(0.9727);transform-origin:left center;">View</span>
<span class="t" id="t4" style="left:104.79999999999998px;top:35.54px;font-size:12px;font-weight:400;color:#2b2b2b;transform:scaleX(0.9961);transform-origin:left center;">Sequence</span>
<span class="t" id="t5" style="left:167.57746296562632px;top:35.54px;font-size:12px;font-weight:400;color:#2b2b2b;transform:scaleX(1.0416);transform-origin:left center;">Tools</span>
<span class="t" id="t6" style="left:205.59723701006328px;top:35.54px;font-size:12px;font-weight:400;color:#2b2b2b;transform:scaleX(1.0328);transform-origin:left center;">Window</span>
<span class="t" id="t7" style="left:257.7979591836735px;top:35.54px;font-size:12px;font-weight:400;color:#2b2b2b;transform:scaleX(1.0616);transform-origin:left center;">Help</span>
<span class="t" id="t8" style="left:114.60000000000002px;top:115.34px;font-size:12px;font-weight:400;color:#1e1e1e;transform:scaleX(1.0223);transform-origin:left center;">No filter selected</span>
<span class="t" id="t9" style="left:41.8px;top:140.56px;font-size:10.5px;font-weight:400;color:#1e1e1e;transform:scaleX(0.9541);transform-origin:left center;">Schedule Statistics Editor</span>
<span class="t" id="t10" style="left:226.0px;top:140.76px;font-size:10.5px;font-weight:700;color:#111111;transform:scaleX(1.0551);transform-origin:left center;">Report - [Schedule Statistics Charts]</span>
<span class="t" id="t11" style="left:29.478013033189146px;top:169.86px;font-size:10.5px;font-weight:400;color:#1e1e1e;transform:scaleX(0.9821);transform-origin:left center;">Select Dataset Name(s) for Charts</span>
<span class="t" id="t12" style="left:195.01219754314334px;top:169.36px;font-size:10.5px;font-weight:400;color:#1e1e1e;transform:scaleX(0.9610);transform-origin:left center;">Schedule, Backward</span>
<span class="t" id="t13" style="left:1444.9777062716291px;top:170.36px;font-size:10.5px;font-weight:400;color:#1e1e1e;transform:scaleX(0.9904);transform-origin:left center;">View Report</span>
<span class="t" id="t14" style="left:64px;top:199.57px;font-size:12.5px;font-weight:400;color:#1e1e1e;transform:scaleX(0.7910);transform-origin:left center;">1</span>
<span class="t" id="t15" style="left:95.69390187361657px;top:199.57px;font-size:12.5px;font-weight:400;color:#1e1e1e;transform:scaleX(1.0797);transform-origin:left center;">of</span>
<span class="t" id="t16" style="left:115px;top:199.57px;font-size:12.5px;font-weight:400;color:#1e1e1e;transform:scaleX(0.7910);transform-origin:left center;">1</span>
<span class="t" id="t17" style="left:318.79999999999995px;top:200.47px;font-size:12.5px;font-weight:400;color:#1e1e1e;transform:scaleX(0.9363);transform-origin:left center;">100%</span>
<span class="t" id="t18" style="left:479.79999999999995px;top:199.57px;font-size:12.5px;font-weight:400;color:#8a8a8a;transform:scaleX(0.9642);transform-origin:left center;">Find</span>
<span class="t" id="t19" style="left:520.0px;top:199.57px;font-size:12.5px;font-weight:400;color:#8a8a8a;transform:scaleX(0.9815);transform-origin:left center;">Next</span>
<span class="t" id="t20" style="left:27.099999999999998px;top:244.29px;font-size:26px;font-weight:700;color:#00577d;transform:scaleX(0.9756);transform-origin:left center;">Schedule Statistics Chart</span>
<span class="t" id="t21" style="left:1320.638532110092px;top:234.68px;font-size:14.5px;font-weight:400;color:#1e1e1e;transform:scaleX(0.9413);transform-origin:left center;">4/3/2023 3:42 PM</span>
<span class="t" id="t22" style="left:36.71111111111111px;top:290.15px;font-size:14px;font-weight:400;color:#1e1e1e;transform:scaleX(0.9541);transform-origin:left center;">Selected Datasetnames For Charts: Schedule, Backward with Reverse Priority, Forward By Schedule Sort Order, Forward By Due Date, Backward By Due Date</span>
<span class="t" id="t23" style="left:48.6px;top:335.26px;font-size:16px;font-weight:700;color:#00577d;transform:scaleX(0.9661);transform-origin:left center;">Orders Chart</span>
<span class="t" id="t24" style="left:79.29819714447042px;top:374.19px;font-size:11px;font-weight:400;color:#333333;transform:scaleX(1.0194);transform-origin:left center;">Incomplete Orders</span>
<span class="t" id="t25" style="left:209.60000000000002px;top:374.19px;font-size:11px;font-weight:400;color:#333333;transform:scaleX(1.0111);transform-origin:left center;">Late Orders</span>
<span class="t" id="t26" style="left:306.05714285714294px;top:374.19px;font-size:11px;font-weight:400;color:#333333;transform:scaleX(1.0202);transform-origin:left center;">On Time Orders</span>
<span class="t" id="t27" style="right:1464.5px;top:720.07px;font-size:12.5px;font-weight:400;color:#666666;">0</span>
<span class="t" id="t28" style="right:1464.5px;top:676.63px;font-size:12.5px;font-weight:400;color:#666666;">2</span>
<span class="t" id="t29" style="right:1464.5px;top:633.19px;font-size:12.5px;font-weight:400;color:#666666;">4</span>
<span class="t" id="t30" style="right:1464.5px;top:589.75px;font-size:12.5px;font-weight:400;color:#666666;">6</span>
<span class="t" id="t31" style="right:1464.5px;top:546.31px;font-size:12.5px;font-weight:400;color:#666666;">8</span>
<span class="t" id="t32" style="right:1464.5px;top:502.87px;font-size:12.5px;font-weight:400;color:#666666;">10</span>
<span class="t" id="t33" style="right:1464.5px;top:459.43px;font-size:12.5px;font-weight:400;color:#666666;">12</span>
<span class="t" id="t34" style="right:1464.5px;top:415.99px;font-size:12.5px;font-weight:400;color:#666666;">14</span>
<span class="t" id="t35" style="left:135.64999999999998px;top:757.87px;font-size:9.6px;font-weight:400;color:#787878;transform:scaleX(1.0132);transform-origin:left center;">Backward By Due Date</span>
<span class="t" id="t36" style="left:223.14999999999998px;top:737.67px;font-size:9.6px;font-weight:400;color:#787878;transform:scaleX(1.0206);transform-origin:left center;">Backward with Reverse Priority</span>
<span class="t" id="t37" style="left:348.65px;top:757.87px;font-size:9.6px;font-weight:400;color:#787878;transform:scaleX(1.0244);transform-origin:left center;">Forward By Due Date</span>
<span class="t" id="t38" style="left:428.65px;top:737.67px;font-size:9.6px;font-weight:400;color:#787878;transform:scaleX(1.0383);transform-origin:left center;">Forward By Schedule Sort Order</span>
<span class="t" id="t39" style="left:585.9000000000001px;top:757.87px;font-size:9.6px;font-weight:400;color:#787878;transform:scaleX(0.9996);transform-origin:left center;">Schedule</span>
<span class="t" id="t40" style="left:768.8000000000002px;top:337.06px;font-size:16px;font-weight:700;color:#00577d;transform:scaleX(0.9936);transform-origin:left center;">Operations Chart</span>
<span class="t" id="t41" style="left:800.3716882908466px;top:376.19px;font-size:11px;font-weight:400;color:#333333;transform:scaleX(0.9971);transform-origin:left center;">Unscheduled Operations</span>
<span class="t" id="t42" style="left:961.1999999999998px;top:376.19px;font-size:11px;font-weight:400;color:#333333;transform:scaleX(1.0080);transform-origin:left center;">Late Operations</span>
<span class="t" id="t43" style="left:1078.629675324675px;top:376.19px;font-size:11px;font-weight:400;color:#333333;transform:scaleX(1.0042);transform-origin:left center;">Started Operations</span>
<span class="t" id="t44" style="left:1210.655389112167px;top:376.19px;font-size:11px;font-weight:400;color:#333333;transform:scaleX(1.0157);transform-origin:left center;">On Time Operations</span>
<span class="t" id="t45" style="right:743.8px;top:720.73px;font-size:13.2px;font-weight:400;color:#666666;">0</span>
<span class="t" id="t46" style="right:743.8px;top:660.15px;font-size:13.2px;font-weight:400;color:#666666;">5</span>
<span class="t" id="t47" style="right:743.8px;top:599.57px;font-size:13.2px;font-weight:400;color:#666666;">10</span>
<span class="t" id="t48" style="right:743.8px;top:538.99px;font-size:13.2px;font-weight:400;color:#666666;">15</span>
<span class="t" id="t49" style="right:743.8px;top:478.41px;font-size:13.2px;font-weight:400;color:#666666;">20</span>
<span class="t" id="t50" style="right:743.8px;top:417.83px;font-size:13.2px;font-weight:400;color:#666666;">25</span>
<span class="t" id="t51" style="left:853.55px;top:758.27px;font-size:9.6px;font-weight:400;color:#787878;transform:scaleX(1.0183);transform-origin:left center;">Backward By Due Date</span>
<span class="t" id="t52" style="left:939.05px;top:738.27px;font-size:9.6px;font-weight:400;color:#787878;transform:scaleX(1.0206);transform-origin:left center;">Backward with Reverse Priority</span>
<span class="t" id="t53" style="left:1061.8px;top:758.27px;font-size:9.6px;font-weight:400;color:#787878;transform:scaleX(1.0352);transform-origin:left center;">Forward By Due Date</span>
<span class="t" id="t54" style="left:1140.05px;top:738.27px;font-size:9.6px;font-weight:400;color:#787878;transform:scaleX(1.0383);transform-origin:left center;">Forward By Schedule Sort Order</span>
<span class="t" id="t55" style="left:1294.55px;top:758.27px;font-size:9.6px;font-weight:400;color:#787878;transform:scaleX(1.0246);transform-origin:left center;">Schedule</span>
<span class="t" id="t56" style="left:5.100000000000001px;top:815.24px;font-size:12px;font-weight:400;color:#1e1e1e;transform:scaleX(0.9508);transform-origin:left center;">Ready</span>
<span class="t" id="t57" style="left:1440.3999999999996px;top:815.14px;font-size:12px;font-weight:400;color:#1e1e1e;transform:scaleX(1.0030);transform-origin:left center;">Edit Operations</span>
<span class="t" id="t58" style="left:9.83825px;top:132px;font-size:10.5px;font-weight:400;color:#3c3c3c;transform:rotate(90deg) scaleX(0.9718);transform-origin:0 0;">Primary Calendars</span>
<span class="t" id="t59" style="left:9.83825px;top:224.3px;font-size:10.5px;font-weight:400;color:#3c3c3c;transform:rotate(90deg) scaleX(0.9655);transform-origin:0 0;">Secondary Calendars</span>
<span class="t" id="t60" style="left:1527.1115px;top:132px;font-size:11px;font-weight:400;color:#3c3c3c;transform:rotate(90deg) scaleX(0.9084);transform-origin:0 0;">Reports</span>
</div>
</body></html>
